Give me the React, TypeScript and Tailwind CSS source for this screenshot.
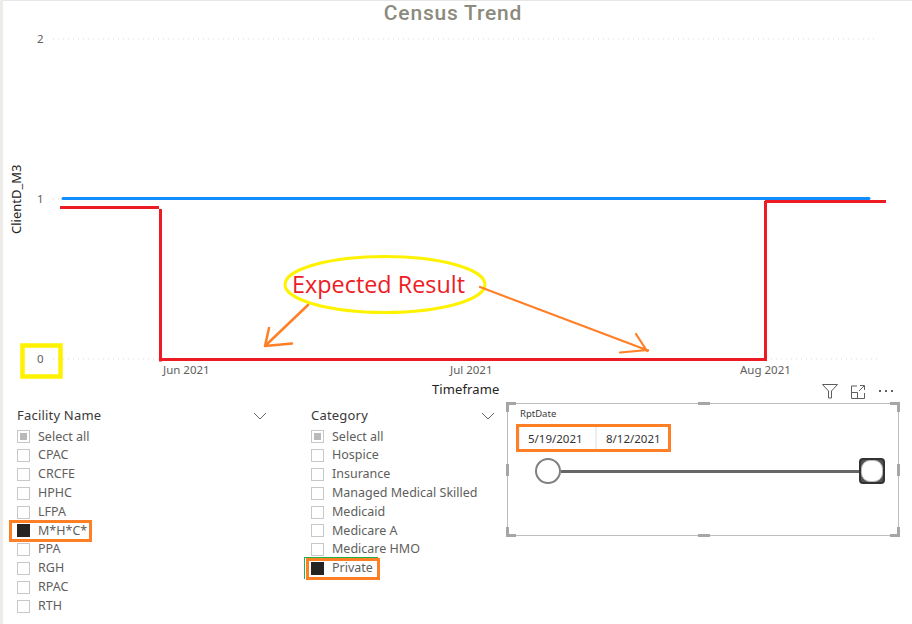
import React from "react";

const facility = ["Select all", "CPAC", "CRCFE", "HPHC", "LFPA", "M*H*C*", "PPA", "RGH", "RPAC", "RTH"];
const category = ["Select all", "Hospice", "Insurance", "Managed Medical Skilled", "Medicaid", "Medicare A", "Medicare HMO", "Private"];

function Chevron() {
  return (
    <svg width="14" height="8" viewBox="0 0 14 8" fill="none" stroke="#666" strokeWidth="1" className="shrink-0">
      <path d="M1 1l6 6 6-6" />
    </svg>
  );
}

function Slicer({ title, items, selected, chevronGap, className }: { title: string; items: string[]; selected: string; chevronGap: string; className: string }) {
  return (
    <div className={className}>
      <div className={`flex items-center h-[19px] ${chevronGap}`}>
        <span className="text-[13px] leading-[19px] text-[#3a3a3a] tracking-[0.2px]">{title}</span>
        <Chevron />
      </div>
      <ul className="mt-[2.5px]">
        {items.map((it, i) => (
          <li key={it} className="flex items-center h-[18.8px] gap-[8px]">
            <span className={`w-[13px] h-[13px] flex items-center justify-center shrink-0 ${it === selected ? "bg-[#252423]" : "border border-[#c8c8c8] bg-white"}`}>
              {i === 0 && <span className="block w-[7px] h-[7px] bg-[#b9b9b9]" />}
            </span>
            <span className="text-[12.5px] leading-none text-[#605e5c] whitespace-nowrap">{it}</span>
          </li>
        ))}
      </ul>
    </div>
  );
}

function Handle({ className }: { className: string }) {
  return <span className={`absolute bg-[#a6a6a6] ${className}`} />;
}

export default function App() {
  return (
    <div className="relative w-[912px] h-[624px] overflow-hidden bg-white border-l-[3px] border-[#eeece9] font-['Noto_Sans','Open_Sans',sans-serif]">
      <div className="h-[1px] bg-[#e6e6e6]" />
      <div className="h-[24px] text-center text-[21px] leading-[24px] font-medium text-[#8b8a7c] font-['Roboto',sans-serif] tracking-[0.8px] pr-[9px]">
        Census Trend
      </div>

      <svg width="909" height="376" viewBox="3 25 909 376" className="block" fill="none">
        <g className="font-['Noto_Sans',sans-serif]" fontSize="11.500" fill="#605e5c" stroke="none">
          <text x="37" y="43">2</text>
          <text x="37" y="203">1</text>
          <text x="37" y="363">0</text>
          <text x="163" y="374">Jun 2021</text>
          <text x="450" y="374">Jul 2021</text>
          <text x="740" y="374">Aug 2021</text>
          <text x="432" y="394" fontSize="13" letterSpacing="0.1" fill="#252423">Timeframe</text>
          <text transform="translate(21 234) rotate(-90)" fontSize="13" fill="#252423">ClientD_M3</text>
        </g>
        <g stroke="#d9d9d9" strokeDasharray="1 4" strokeWidth="1">
          <path d="M53 39H878M53 199H62M53 359H160M766 359H878" />
        </g>
        <path d="M63 198.500H869" stroke="#118dff" strokeWidth="3" strokeLinecap="round" />
        <path d="M60 207.500H159M160.500 209V361.500M160 359.500H765.500V201M765 201.500H886" stroke="#ed1c24" strokeWidth="3" />
        <rect x="22.500" y="345.500" width="38" height="31" stroke="#fff200" strokeWidth="4.500" />
        <ellipse cx="385" cy="284.500" rx="100" ry="28" stroke="#fff200" strokeWidth="3" />
        <g stroke="#ff7f27" strokeLinecap="round" strokeLinejoin="round">
          <path d="M308 305L265 346M265 346L269 328M265 346L292 343.500" strokeWidth="2.500" />
          <path d="M480 287L648 350.500M636 334L647 351M620 352.500L648 350" strokeWidth="2.200" />
        </g>
      </svg>

      <span className="absolute left-[289px] top-[266px] text-[23.400px] leading-[36px] text-[#ed1c24] font-['Open_Sans',sans-serif] whitespace-nowrap">Expected Result</span>

      <div className="flex h-[223px]">
        <Slicer title="Facility Name" items={facility} selected="M*H*C*" chevronGap="gap-[152px]" className="w-[294px] ml-[14px] pt-[5px]" />
        <Slicer title="Category" items={category} selected="Private" chevronGap="gap-[113px]" className="w-[196px] pt-[5px]" />

        <div className="relative w-[392px] h-[133px] mt-[2px] border border-[#bdbdbd]">
          <Handle className="-left-[2px] -top-[2px] w-[10px] h-[3px]" />
          <Handle className="-left-[2px] -top-[2px] w-[3px] h-[10px]" />
          <Handle className="-right-[2px] -top-[2px] w-[10px] h-[3px]" />
          <Handle className="-right-[2px] -top-[2px] w-[3px] h-[10px]" />
          <Handle className="-left-[2px] -bottom-[2px] w-[10px] h-[3px]" />
          <Handle className="-left-[2px] -bottom-[2px] w-[3px] h-[10px]" />
          <Handle className="-right-[2px] -bottom-[2px] w-[10px] h-[3px]" />
          <Handle className="-right-[2px] -bottom-[2px] w-[3px] h-[10px]" />
          <Handle className="left-[190px] -top-[2px] w-[12px] h-[3px]" />
          <Handle className="left-[190px] -bottom-[2px] w-[12px] h-[3px]" />
          <Handle className="-left-[2px] top-[60px] w-[3px] h-[12px]" />
          <Handle className="-right-[2px] top-[60px] w-[3px] h-[12px]" />

          <div className="pl-[12px] pt-[3px] text-[9.500px] leading-[14px] text-[#3a3a3a]">RptDate</div>
          <div className="flex ml-[11px] mt-[6px] w-[149px] h-[24px] text-[11.500px] leading-[24px] text-[#333]">
            <span className="w-[77px] pl-[8px] border-x border-[#eeeeee]">5/19/2021</span>
            <span className="pl-[9px] border-l border-[#eeeeee]">8/12/2021</span>
          </div>
          <div className="flex items-center ml-[27px] mt-[7px] w-[350px] h-[26px]">
            <span className="w-[26px] h-[26px] rounded-full border-[2.500px] border-[#808080] bg-white shrink-0" />
            <span className="flex-1 h-[3px] bg-[#666]" />
            <span className="w-[26px] h-[26px] rounded-[4px] border-2 border-[#333] shrink-0 flex items-center justify-center bg-[#555]">
              <span className="w-[22px] h-[22px] rounded-[9px] border border-[#bbb] bg-white" />
            </span>
          </div>
        </div>
      </div>

      {/* selection call-outs drawn over the slicers */}
      <span className="absolute left-[6px] top-[520px] w-[83px] h-[22px] border-[3px] border-[#ff7f27]" />
      <span className="absolute left-[301px] top-[557px] w-[74px] h-[22px] border-l-[1.500px] border-t-[1.500px] border-r-[1.500px] border-[#22b14c]" />
      <span className="absolute left-[303px] top-[558px] w-[74px] h-[22px] border-[3px] border-[#ff7f27]" />
      <span className="absolute left-[513px] top-[424px] w-[155px] h-[28px] border-[3px] border-[#ff7f27]" />

      {/* visual header icons */}
      <div className="absolute left-[819px] top-[384px] flex items-center gap-[13px]">
        <svg width="16" height="15" viewBox="0 0 16 15" fill="none" stroke="#605e5c" strokeWidth="1"><path d="M0.500 0.500H15.500L9.500 7V14H6.500V7Z" /></svg>
        <svg width="14" height="14" viewBox="0 0 14 14" fill="none" stroke="#605e5c" strokeWidth="1"><path d="M6 1H0.500V13.500H13.500V8M0.500 7.500H6.500V13.500M8 6L13 1M9 0.500H13.500V5" /></svg>
        <svg width="15" height="3" viewBox="0 0 15 3" fill="#605e5c" className="ml-[1px]"><rect x="0" y="0" width="2" height="2" /><rect x="6" y="0" width="2" height="2" /><rect x="12" y="0" width="2" height="2" /></svg>
      </div>
    </div>
  );
}
